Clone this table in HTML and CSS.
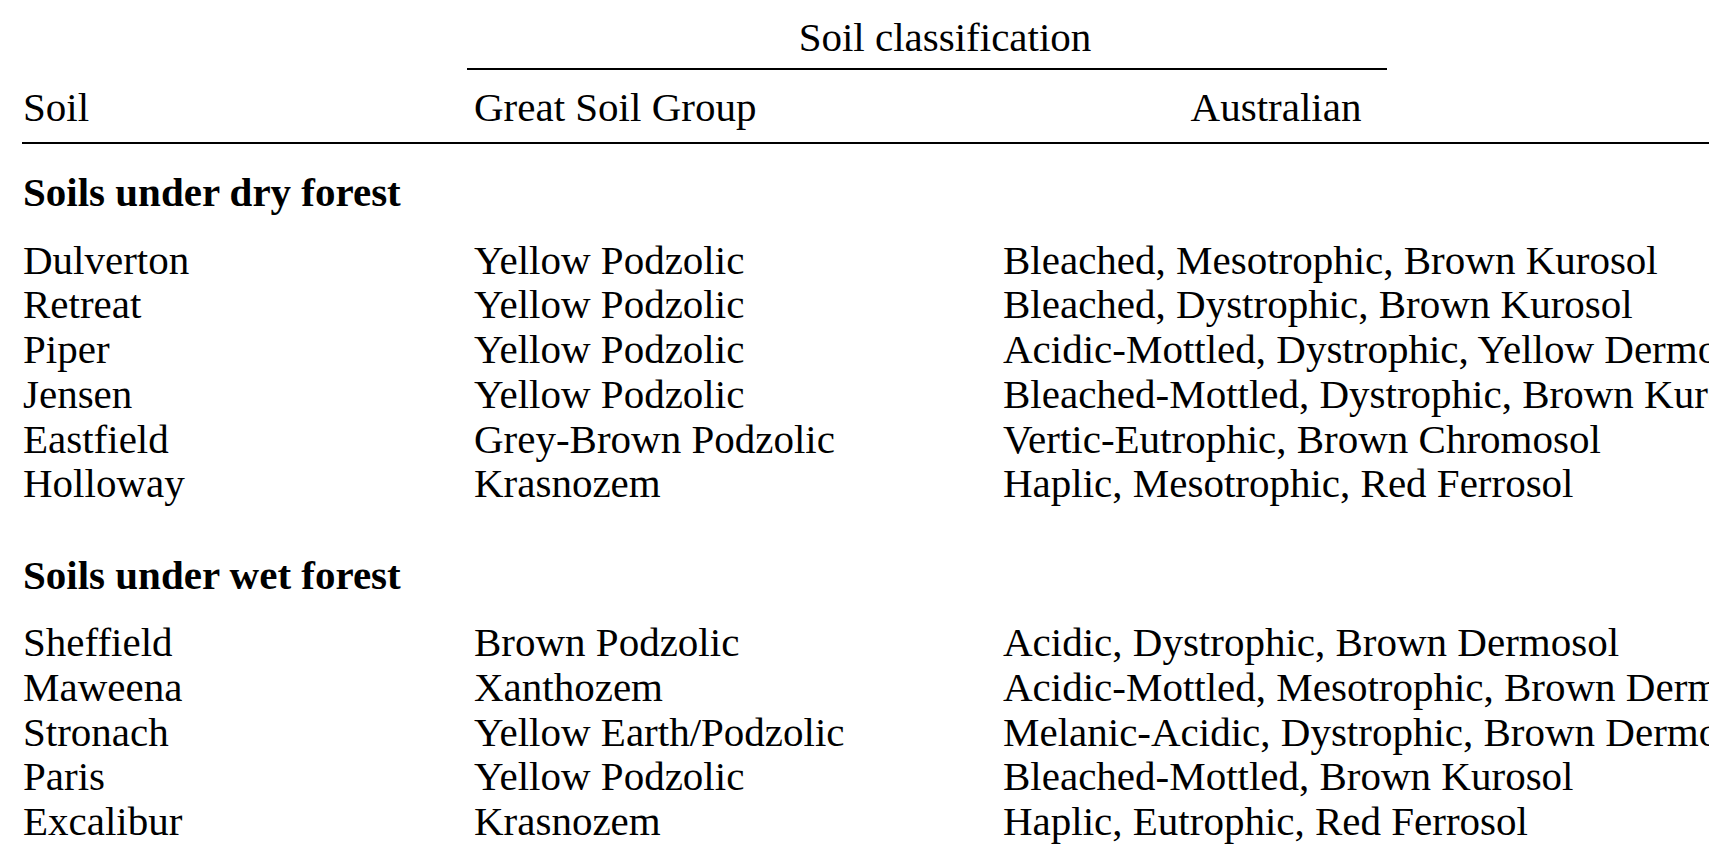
FILE: index.html
```html
<!DOCTYPE html>
<html lang="en">
<head>
<meta charset="utf-8">
<title>Soil classification</title>
<link rel="stylesheet" href="styles.css">
</head>
<body>
<div class="table">
  <div class="row title-row">
    <div class="cell spanner"><div class="span-title">Soil classification</div></div>
  </div>
  <div class="row head-row">
    <div class="cell c1">Soil</div>
    <div class="cell c2">Great Soil Group</div>
    <div class="cell c3 center">Australian</div>
  </div>

  <div class="group">Soils under dry forest</div>
  <div class="body">
    <div class="row"><div class="cell c1">Dulverton</div><div class="cell c2">Yellow Podzolic</div><div class="cell c3">Bleached, Mesotrophic, Brown Kurosol</div></div>
    <div class="row"><div class="cell c1">Retreat</div><div class="cell c2">Yellow Podzolic</div><div class="cell c3">Bleached, Dystrophic, Brown Kurosol</div></div>
    <div class="row"><div class="cell c1">Piper</div><div class="cell c2">Yellow Podzolic</div><div class="cell c3">Acidic-Mottled, Dystrophic, Yellow Dermosol</div></div>
    <div class="row"><div class="cell c1">Jensen</div><div class="cell c2">Yellow Podzolic</div><div class="cell c3">Bleached-Mottled, Dystrophic, Brown Kurosol</div></div>
    <div class="row"><div class="cell c1">Eastfield</div><div class="cell c2">Grey-Brown Podzolic</div><div class="cell c3">Vertic-Eutrophic, Brown Chromosol</div></div>
    <div class="row"><div class="cell c1">Holloway</div><div class="cell c2">Krasnozem</div><div class="cell c3">Haplic, Mesotrophic, Red Ferrosol</div></div>
  </div>

  <div class="group wet">Soils under wet forest</div>
  <div class="body">
    <div class="row"><div class="cell c1">Sheffield</div><div class="cell c2">Brown Podzolic</div><div class="cell c3">Acidic, Dystrophic, Brown Dermosol</div></div>
    <div class="row"><div class="cell c1">Maweena</div><div class="cell c2">Xanthozem</div><div class="cell c3">Acidic-Mottled, Mesotrophic, Brown Dermosol</div></div>
    <div class="row"><div class="cell c1">Stronach</div><div class="cell c2">Yellow Earth/Podzolic</div><div class="cell c3">Melanic-Acidic, Dystrophic, Brown Dermosol</div></div>
    <div class="row"><div class="cell c1">Paris</div><div class="cell c2">Yellow Podzolic</div><div class="cell c3">Bleached-Mottled, Brown Kurosol</div></div>
    <div class="row"><div class="cell c1">Excalibur</div><div class="cell c2">Krasnozem</div><div class="cell c3">Haplic, Eutrophic, Red Ferrosol</div></div>
  </div>
</div>
</body>
</html>
```

FILE: styles.css
```css
html, body {
  margin: 0;
  padding: 0;
  background: #ffffff;
  overflow: hidden;
}

body {
  font-family: "Liberation Serif", "Times New Roman", serif;
  font-size: 41px;
  line-height: 44.7px;
  color: #000000;
}

.table {
  width: 1800px;
  margin-left: 22px;
  padding-top: 14.5px;
}

.row {
  display: grid;
  grid-template-columns: 445px 527px 564px 1fr;
}

.cell {
  white-space: nowrap;
}

.c1 {
  grid-column: 1;
  padding-left: 1px;
}

.c2 {
  grid-column: 2;
  padding-left: 7px;
}

.c3 {
  grid-column: 3 / 5;
  padding-left: 9px;
}

.center {
  grid-column: 3;
  padding-left: 0;
  text-align: center;
}

.spanner {
  grid-column: 2 / 5;
}

.span-title {
  width: 920px;
  box-sizing: border-box;
  padding-left: 36px;
  padding-bottom: 8.8px;
  text-align: center;
  border-bottom: 2px solid #000000;
}

.head-row {
  margin-top: 14.6px;
  padding-bottom: 12.9px;
  border-bottom: 2px solid #000000;
}

.group {
  font-weight: bold;
  padding-left: 1px;
  margin-top: 25.5px;
  margin-bottom: 23.3px;
}

.group.wet {
  margin-top: 46.8px;
  margin-bottom: 22.9px;
}
```
